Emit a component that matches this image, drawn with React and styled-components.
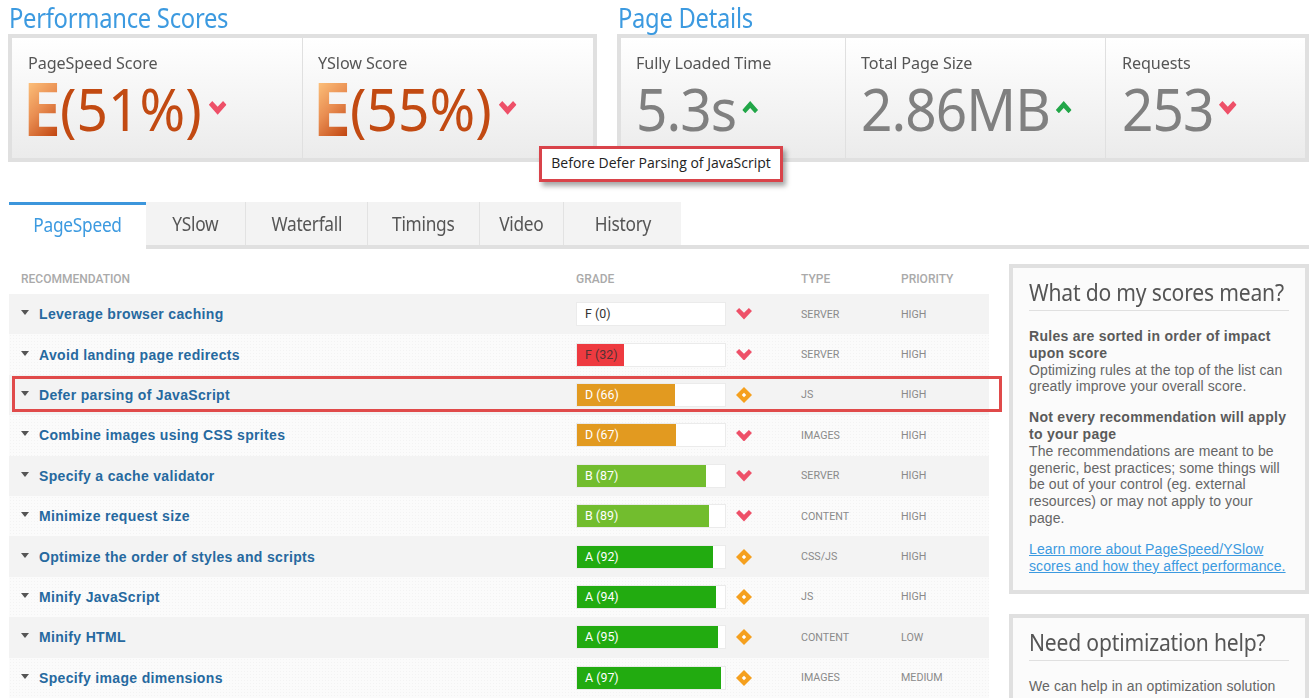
import React from "react";
import styled, {createGlobalStyle} from "styled-components";

const Global = createGlobalStyle`
  html, body { margin: 0; padding: 0; background: #fff; overflow: hidden; }
  * { box-sizing: border-box; }
`

const Page = styled.div`
  position: relative;
  width: 1316px;
  height: 698px;
  overflow: hidden;
  padding: 0 7px 0 8px;
  font-family: "Noto Sans", sans-serif;
`

const Top = styled.div`
  display: flex;
  gap: 20px;
`

const Section = styled.section`
  width: ${p => p.$width}px;
`

const Heading = styled.h2`
  margin: 0;
  height: 34px;
  padding-left: 1px;
  font-size: 27px;
  line-height: 36px;
  font-weight: 400;
  letter-spacing: -0.3px;
  color: #3c9ae0;
  transform: scaleX(0.88);
  transform-origin: left;
`

const Panel = styled.div`
  display: flex;
  height: 128px;
  border: 4px solid #e0e0e0;
  background: linear-gradient(#fff, #ebebeb);
`

const Metric = styled.div`
  width: ${p => p.$width}px;
  padding: 13px 0 0 ${p => p.$pad}px;
  border-right: 1px solid #e0e0e0;
  &:last-child { border-right: 0; flex: 1; }
`

const MetricLabel = styled.div`
  font-size: 17px;
  line-height: 24px;
  letter-spacing: -0.1px;
  color: #555;
  transform: scaleX(0.95);
  transform-origin: left;
`

const MetricValue = styled.div`
  display: flex;
  align-items: center;
  height: 70px;
  padding-bottom: 4px;
  font-size: 59px;
  line-height: 62px;
  letter-spacing: -1px;
  color: ${p => p.$color};
  transform: scaleX(0.932);
  transform-origin: left;
  svg { align-self: flex-start; margin: 26px 0 0 6px; }
`

const Letter = styled.span`
  margin-left: -6px;
  font-size: 74px;
  line-height: 62px;
  font-weight: 700;
  background: linear-gradient(135deg, #fdc27c 10%, #e98e52 50%, #c0440f 95%);
  -webkit-background-clip: text;
  background-clip: text;
  color: transparent;
`

const Percent = styled.span`
  margin-right: 2px;
  letter-spacing: 0;
`

const Tabs = styled.div`
  display: flex;
  margin-top: 40px;
  margin-left: 1px;
  height: 47px;
  border-bottom: 4px solid #e0e0e0;
`

const Tab = styled.div`
  width: ${p => p.$width}px;
  height: ${p => (p.$active ? "47px" : "43px")};
  display: flex;
  align-items: center;
  justify-content: center;
  padding-bottom: ${p => (p.$active ? "5px" : "0")};
  font-size: 19px;
  letter-spacing: -0.3px;
  color: ${p => (p.$active ? "#3c9ae0" : "#555")};
  background: ${p => (p.$active ? "#fff" : "#f3f3f3")};
  border-top: ${p => (p.$active ? "3px solid #3c96dc" : "0")};
  border-right: ${p => (p.$active ? "0" : "1px solid #e2e2e2")};
  &:last-child { border-right: 0; }
`

const TabLabel = styled.span`
  transform: scaleX(0.91);
`

const Main = styled.div`
  display: flex;
  align-items: flex-start;
  gap: 20px;
  margin-left: 1px;
`

const Table = styled.div`
  width: 980px;
  padding-top: 20px;
`

const Columns = `
  display: grid;
  grid-template-columns: 567px 225px 100px 1fr;
  align-items: center;
`

const HeadRow = styled.div`
  ${Columns}
  height: 25px;
  font-family: "Roboto", sans-serif;
  font-size: 12px;
  font-weight: 500;
  color: #aaa;
  padding-bottom: 5px;
  > :first-child { padding-left: 12px; }
`

const Row = styled.div`
  ${Columns}
  height: 40.4px;
  background-color: ${p => (p.$odd ? "#f3f3f3" : "#fbfbfb")};
  background-image: ${p => (p.$odd ? "none" : "radial-gradient(#f3f3f3 0.7px, transparent 0.8px)")};
  background-size: 3px 3px;
`

const Name = styled.div`
  display: flex;
  align-items: center;
  padding-left: 12px;
  font-family: "Liberation Sans", sans-serif;
  font-weight: 700;
  font-size: 14px;
  letter-spacing: 0.33px;
  color: #26699f;
`

const Caret = styled.span`
  width: 0;
  height: 0;
  margin: 0 10px 3px 0;
  border-left: 4px solid transparent;
  border-right: 4px solid transparent;
  border-top: 5px solid #555;
`

const GradeCell = styled.div`
  display: flex;
  align-items: center;
`

const Bar = styled.div`
  position: relative;
  width: 150px;
  height: 24px;
  background: #fff;
  border: 1px solid #ebebeb;
`

const Fill = styled.div`
  height: 100%;
  background: ${p => p.$color};
`

const BarText = styled.span`
  position: absolute;
  left: 8px;
  top: 3px;
  font-family: "Roboto", sans-serif;
  font-size: 12.4px;
  line-height: 16px;
  color: ${p => p.$color};
`

const Mark = styled.span`
  display: flex;
  margin-left: 10px;
`

const Small = styled.div`
  font-family: "Roboto", sans-serif;
  font-size: 10.7px;
  color: #8a8a8a;
`

const Side = styled.aside`
  width: 300px;
  padding-top: 15px;
`

const Box = styled.div`
  border: 4px solid #e0e0e0;
  background: #fbfbfb;
  padding: 9px 16px 16px;
  margin-bottom: 20px;
  font-family: "Liberation Sans", sans-serif;
  font-size: 14px;
  line-height: 16.8px;
  letter-spacing: 0.1px;
  color: #666;
`

const BoxTitle = styled.h3`
  margin: 0 0 17px;
  height: 34px;
  font-family: "Noto Sans", sans-serif;
  font-size: 23px;
  line-height: 31px;
  font-weight: 400;
  letter-spacing: -0.2px;
  color: #555;
  border-bottom: 1px solid #e0e0e0;
  white-space: nowrap;
`

const TitleText = styled.span`
  display: inline-block;
  transform: scaleX(0.917);
  transform-origin: left;
`

const Para = styled.p`
  margin: 0 0 14px;
  &:last-child { margin-bottom: 0; }
  strong { display: block; letter-spacing: 0.28px; color: #5a5a5a; }
`

const MoreLink = styled.a`
  color: #3c9ae0;
  text-decoration: underline;
`

const Outline = styled.div`
  position: absolute;
  left: 12px;
  top: 376px;
  width: 990px;
  height: 36px;
  border: 3px solid #e04a4a;
  pointer-events: none;
`

const Tooltip = styled.div`
  position: absolute;
  left: 539px;
  top: 146px;
  width: 244px;
  height: 36px;
  display: flex;
  align-items: center;
  justify-content: center;
  padding-bottom: 3px;
  background: #fff;
  border: 3px solid #d9434a;
  box-shadow: 3px 4px 5px rgba(0, 0, 0, 0.35);
  font-family: "Open Sans", sans-serif;
  font-size: 14px;
  color: #222;
`

const Down = ({size = 19}) => (
    <svg width={size} height={size * 0.72} viewBox="0 0 18 13">
        <path d="M0 3.5 3.5 0 9 5.5 14.5 0 18 3.5 9 13z" fill="#ee5068"/>
    </svg>
)

const Up = ({size = 17}) => (
    <svg width={size} height={size * 0.72} viewBox="0 0 18 13">
        <path d="M0 9.5 3.5 13 9 7.5 14.5 13 18 9.5 9 0z" fill="#22a648"/>
    </svg>
)

const Diamond = () => (
    <svg width="16" height="16" viewBox="0 0 16 16">
        <path d="M8 0 16 8 8 16 0 8z" fill="#f5a01e"/>
        <path d="M8 5.8 10.2 8 8 10.2 5.8 8z" fill="#fff"/>
    </svg>
)

const rules = [
    ["Leverage browser caching", "F", 0, "#fff", "down", "SERVER", "HIGH"],
    ["Avoid landing page redirects", "F", 32, "#ee3a40", "down", "SERVER", "HIGH"],
    ["Defer parsing of JavaScript", "D", 66, "#e29a20", "same", "JS", "HIGH"],
    ["Combine images using CSS sprites", "D", 67, "#e29a20", "down", "IMAGES", "HIGH"],
    ["Specify a cache validator", "B", 87, "#72bd2e", "down", "SERVER", "HIGH"],
    ["Minimize request size", "B", 89, "#72bd2e", "down", "CONTENT", "HIGH"],
    ["Optimize the order of styles and scripts", "A", 92, "#22ab10", "same", "CSS/JS", "HIGH"],
    ["Minify JavaScript", "A", 94, "#22ab10", "same", "JS", "HIGH"],
    ["Minify HTML", "A", 95, "#22ab10", "same", "CONTENT", "LOW"],
    ["Specify image dimensions", "A", 97, "#22ab10", "same", "IMAGES", "MEDIUM"],
]

const tabs = [
    ["PageSpeed", 137], ["YSlow", 100], ["Waterfall", 122],
    ["Timings", 112], ["Video", 84], ["History", 117],
]

const barTextColor = (grade, score) => {
    if (score === 0) return "#333"
    if (grade === "F") return "#553333"
    return "#fff"
}

export default function App() {
    return (
        <Page>
            <Global/>
            <Top>
                <Section $width={589}>
                    <Heading>Performance Scores</Heading>
                    <Panel>
                        <Metric $width={291} $pad={16}>
                            <MetricLabel>PageSpeed Score</MetricLabel>
                            <MetricValue $color="#c24a12"><Letter>E</Letter><Percent>(51%)</Percent><Down/></MetricValue>
                        </Metric>
                        <Metric $pad={15}>
                            <MetricLabel>YSlow Score</MetricLabel>
                            <MetricValue $color="#c24a12"><Letter>E</Letter><Percent>(55%)</Percent><Down/></MetricValue>
                        </Metric>
                    </Panel>
                </Section>
                <Section $width={692}>
                    <Heading>Page Details</Heading>
                    <Panel>
                        <Metric $width={225} $pad={15}>
                            <MetricLabel>Fully Loaded Time</MetricLabel>
                            <MetricValue $color="#808080">5.3s<Up/></MetricValue>
                        </Metric>
                        <Metric $width={260} $pad={15}>
                            <MetricLabel>Total Page Size</MetricLabel>
                            <MetricValue $color="#808080">2.86MB<Up/></MetricValue>
                        </Metric>
                        <Metric $pad={16}>
                            <MetricLabel>Requests</MetricLabel>
                            <MetricValue $color="#808080">253<Down/></MetricValue>
                        </Metric>
                    </Panel>
                </Section>
            </Top>
            <Tabs>
                {tabs.map(([label, width], i) => (
                    <Tab key={label} $width={width} $active={i === 0}><TabLabel>{label}</TabLabel></Tab>
                ))}
            </Tabs>
            <Main>
                <Table>
                    <HeadRow>
                        <div>RECOMMENDATION</div>
                        <div>GRADE</div>
                        <div>TYPE</div>
                        <div>PRIORITY</div>
                    </HeadRow>
                    {rules.map(([name, grade, score, color, trend, type, priority], i) => (
                        <Row key={name} $odd={i % 2 === 0}>
                            <Name><Caret/>{name}</Name>
                            <GradeCell>
                                <Bar>
                                    <Fill $color={color} style={{width: `${score}%`}}/>
                                    <BarText $color={barTextColor(grade, score)}>{grade} ({score})</BarText>
                                </Bar>
                                <Mark>{trend === "down" ? <Down size={16}/> : <Diamond/>}</Mark>
                            </GradeCell>
                            <Small>{type}</Small>
                            <Small>{priority}</Small>
                        </Row>
                    ))}
                </Table>
                <Side>
                    <Box>
                        <BoxTitle><TitleText>What do my scores mean?</TitleText></BoxTitle>
                        <Para>
                            <strong>Rules are sorted in order of impact upon score</strong>
                            Optimizing rules at the top of the list can greatly improve your overall score.
                        </Para>
                        <Para>
                            <strong>Not every recommendation will apply to your page</strong>
                            The recommendations are meant to be generic, best practices; some things will be out of your control (eg. external resources) or may not apply to your page.
                        </Para>
                        <Para>
                            <MoreLink href="#">Learn more about PageSpeed/YSlow scores and how they affect performance.</MoreLink>
                        </Para>
                    </Box>
                    <Box>
                        <BoxTitle><TitleText>Need optimization help?</TitleText></BoxTitle>
                        <Para>We can help in an optimization solution</Para>
                    </Box>
                </Side>
            </Main>
            <Outline/>
            <Tooltip>Before Defer Parsing of JavaScript</Tooltip>
        </Page>
    )
}
